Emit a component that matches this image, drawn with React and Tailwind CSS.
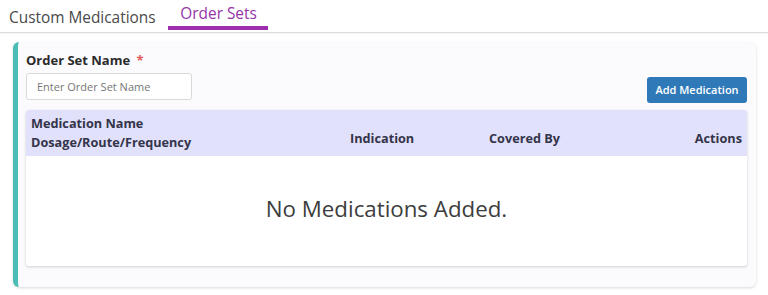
import React from "react";

function Tabs() {
    return (
        <div className="flex h-[33px] border-b border-[#dcdcdc] shadow-[0_1px_1px_rgba(0,0,0,0.04)]">
            <button className="pl-[9px] pr-[12px] pt-[4px] text-[15.4px] text-[#4a4a4a] leading-[22px] h-full">
                Custom Medications
            </button>
            <button className="w-[100px] h-full pt-[4px] pl-[2px] text-[15.4px] leading-[22px] text-[#9535a8] border-b-[4px] border-[#9b2fae] relative top-[-2px]">
                Order Sets
            </button>
        </div>
    );
}

function Table() {
    return (
        <div className="mt-[10px] rounded-[3px] bg-white shadow-[0_1px_3px_rgba(0,0,0,0.18)] overflow-hidden">
            <div className="h-[46px] bg-[#e1e1fb] flex items-center px-[5px] text-[12.7px] font-bold text-[#34344a] leading-[19px]">
                <div className="w-[319px]">
                    <div>Medication Name</div>
                    <div>Dosage/Route/Frequency</div>
                </div>
                <div className="w-[139px] mt-[10px]">Indication</div>
                <div className="flex-1 mt-[10px]">Covered By</div>
                <div className="mt-[10px]">Actions</div>
            </div>
            <div className="h-[110px] flex items-center justify-center text-[22.3px] text-[#3d3d3d] pb-[5px]">
                No Medications Added.
            </div>
        </div>
    );
}

export default function App() {
    return (
        <div className="w-[768px] h-[295px] bg-white font-['Open_Sans',sans-serif] overflow-hidden">
            <Tabs />
            <div className="mt-[9px] ml-[13px] w-[743px] h-[245px] rounded-[6px] bg-[#fbfbfe] border-l-[5px] border-[#4cbdb4] shadow-[0_1px_3px_rgba(0,0,0,0.15)] pl-[8px] pr-[9px] pt-[9px]">
                <div className="flex items-end justify-between">
                    <div>
                        <div className="text-[13px] font-bold text-[#2b2b2b] leading-[18px]">
                            Order Set Name <span className="text-[#e05a5a] ml-[3px]">*</span>
                        </div>
                        <input
                            type="text"
                            placeholder="Enter Order Set Name"
                            className="mt-[4px] w-[166px] h-[27px] rounded-[3px] border border-[#d9d9d9] bg-white px-[10px] text-[11px] placeholder:text-[#777] outline-none"
                        />
                    </div>
                    <button className="mb-[-3px] w-[100px] h-[26px] rounded-[3px] bg-[#2f79b9] text-white text-[11px] font-semibold">
                        Add Medication
                    </button>
                </div>
                <Table />
            </div>
        </div>
    );
}
